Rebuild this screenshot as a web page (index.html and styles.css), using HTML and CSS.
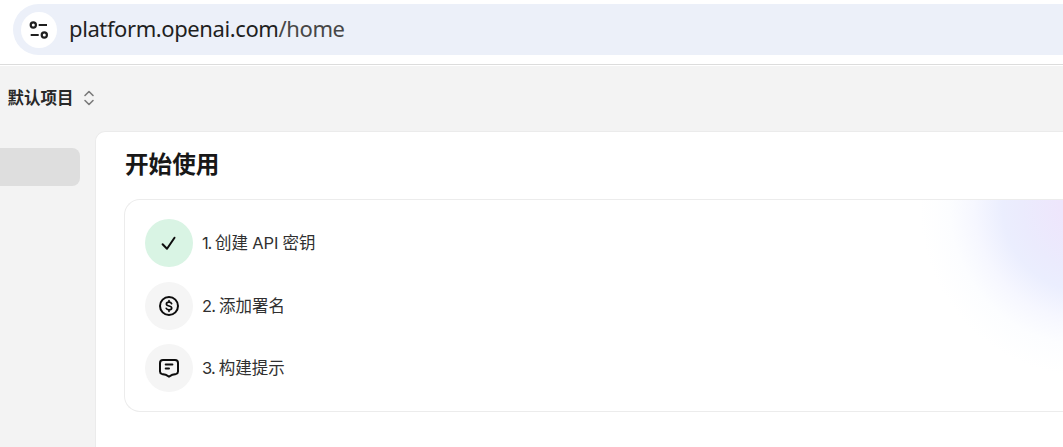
FILE: index.html
```html
<!doctype html>
<html lang="zh-CN">

<head>
  <meta charset="UTF-8" />
  <meta name="viewport" content="width=device-width, initial-scale=1.0" />
  <title>开始使用</title>
  <link rel="stylesheet" href="styles.css">
</head>

<body>
  <div class="toolbar">
    <div class="address-bar">
      <span class="site-info">
        <svg width="20" height="20" viewBox="0 0 20 20" fill="none" stroke="#1f1f1f" stroke-width="2.2">
          <circle cx="4.3" cy="5" r="2.6" />
          <path d="M9.7 5H18M1.7 15h8" />
          <circle cx="15.3" cy="15" r="2.6" />
        </svg>
      </span>
      <span class="url">platform.openai.com<span class="path">/home</span></span>
    </div>
  </div>

  <div class="app">
    <header class="topbar">
      <span class="project">默认项目</span>
      <svg width="12" height="16" viewBox="0 0 12 16" fill="none" stroke="#7a7a7a" stroke-width="1.6"
        stroke-linecap="round" stroke-linejoin="round">
        <path d="M2 5.5l4-4 4 4M2 10.5l4 4 4-4" />
      </svg>
    </header>
    <div class="layout">
      <nav class="sidebar">
        <div class="nav-item active"></div>
      </nav>
      <main class="content">
        <h1>开始使用</h1>
        <ul class="steps">
          <li class="step done">
            <span class="step-icon">
              <svg width="24" height="24" viewBox="0 0 24 24" fill="none" stroke="#0d0d0d" stroke-width="2"
                stroke-linecap="round" stroke-linejoin="round">
                <path d="M5.6 13.2l4.4 4.6 7.5-11.1" />
              </svg>
            </span>
            <span class="step-label"><span class="num">1.</span> 创建 API 密钥</span>
          </li>
          <li class="step">
            <span class="step-icon">
              <svg width="24" height="24" viewBox="0 0 24 24" fill="none" stroke="#0d0d0d" stroke-width="2"
                stroke-linecap="round" stroke-linejoin="round">
                <circle cx="12" cy="12" r="9" />
                <path stroke-width="1.7" d="M14.6 9.6c-.4-1-1.4-1.5-2.6-1.5-1.5 0-2.6.7-2.6 1.9 0 2.7 5.3 1.3 5.3 4 0 1.2-1.1 1.9-2.7 1.9-1.3 0-2.4-.6-2.8-1.6M12 6.7v1.4M12 15.9v1.4" />
              </svg>
            </span>
            <span class="step-label"><span class="num">2.</span> 添加署名</span>
          </li>
          <li class="step">
            <span class="step-icon">
              <svg width="24" height="24" viewBox="0 0 24 24" fill="none" stroke="#0d0d0d" stroke-width="2"
                stroke-linecap="round" stroke-linejoin="round">
                <path d="M6 4h12a3 3 0 0 1 3 3v8.500a2.500 2.500 0 0 1-1.900 2.400L15.500 18.700 12 20.700l-3.500-2-3.600-.8A2.500 2.500 0 0 1 3 15.500V7a3 3 0 0 1 3-3z" />
                <path d="M8.7 8.5h6.700M8.7 12.5h3.300" />
              </svg>
            </span>
            <span class="step-label"><span class="num">3.</span> 构建提示</span>
          </li>
        </ul>
      </main>
    </div>
  </div>
</body>

</html>
```
FILE: styles.css
```css
* {
  box-sizing: border-box;
}

body {
  margin: 0;
  height: 100vh;
  overflow: hidden;
  display: flex;
  flex-direction: column;
  background-color: #ffffff;
  color: #0d0d0d;
  font-family: Inter, 'Noto Sans CJK SC', sans-serif;
}

svg {
  display: block;
}

.toolbar {
  height: 65px;
  padding: 4px 0 0 13px;
  border-bottom: 1px solid #dcdcdc;
}

.address-bar {
  display: flex;
  align-items: center;
  height: 51px;
  padding-left: 8px;
  background-color: #ecf0f9;
  border-radius: 26px 0 0 26px;
}

.site-info {
  display: flex;
  align-items: center;
  justify-content: center;
  width: 36px;
  height: 36px;
  background-color: #ffffff;
  border-radius: 50%;
}

.url {
  margin-left: 12px;
  padding-bottom: 3px;
  font-family: 'Noto Sans', sans-serif;
  font-size: 22px;
  line-height: 30px;
  letter-spacing: -0.4px;
  color: #1f1f1f;
}

.path {
  color: #474747;
}

.app {
  flex: 1;
  display: flex;
  flex-direction: column;
  margin-top: 1px;
  background-color: #f3f3f3;
}

.topbar {
  display: flex;
  align-items: center;
  gap: 9px;
  height: 65px;
  padding: 0 0 2px 7.5px;
}

.project {
  font-size: 16.5px;
  font-weight: 600;
  line-height: 24px;
  color: #282828;
}

.layout {
  flex: 1;
  display: flex;
}

.sidebar {
  width: 95px;
  padding: 17px 15px 0 0;
}

.nav-item {
  height: 38px;
  border-radius: 0 8px 8px 0;
}

.nav-item.active {
  background-color: #dedede;
}

.content {
  flex: 1;
  padding: 16px 0 0 28px;
  background-color: #ffffff;
  border-top: 1px solid #ebebeb;
  border-left: 1px solid #ebebeb;
  border-radius: 10px 0 0 0;
}

h1 {
  margin: 0 0 17px 1px;
  font-size: 23.6px;
  font-weight: 600;
  line-height: 34px;
  color: #181818;
}

.steps {
  display: flex;
  flex-direction: column;
  gap: 14.5px;
  height: 213px;
  margin: 0;
  padding: 19px 20px;
  list-style: none;
  border: 1px solid #ececec;
  border-right: none;
  border-radius: 16px 0 0 16px;
  background: radial-gradient(165px 170px at 960px 6px, #eee6fc 15%, #ebebfd 38%, #ebeefe 50%, #f6f7ff 67%, #fcfdff 82%, #ffffff 100%);
}

.step {
  display: flex;
  align-items: center;
  gap: 9px;
}

.step-icon {
  display: flex;
  align-items: center;
  justify-content: center;
  width: 48px;
  height: 48px;
  background-color: #f5f5f5;
  border-radius: 50%;
}

.step.done .step-icon {
  background-color: #d9f4e4;
}

.step-label {
  font-size: 16.5px;
  line-height: 24px;
  word-spacing: -0.6px;
  color: #303030;
}

.num {
  letter-spacing: -0.9px;
}

.step.done .num {
  letter-spacing: -1.2px;
}
```
